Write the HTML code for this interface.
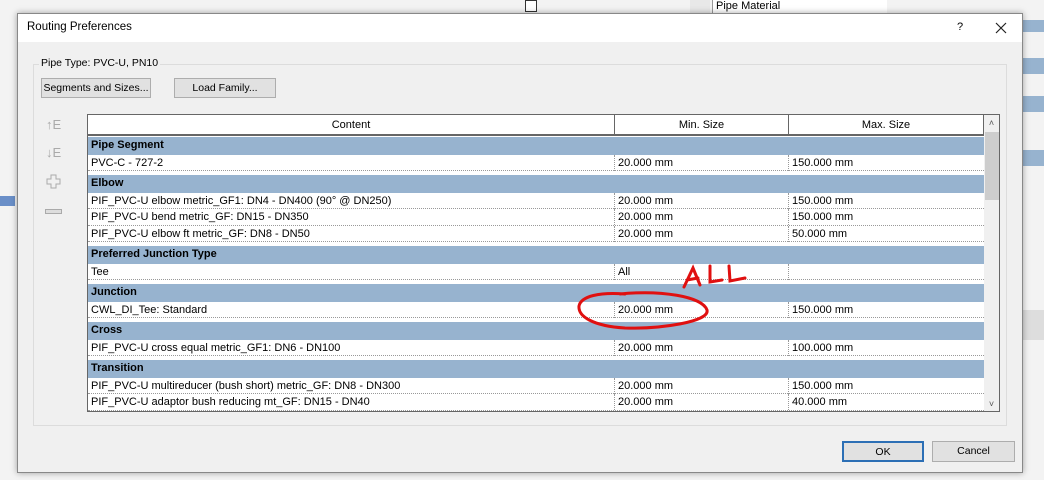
<!DOCTYPE html>
<html><head><style>
*{margin:0;padding:0;box-sizing:border-box}
body{width:1044px;height:480px;overflow:hidden;background:#f3f3f3;font-family:"Liberation Sans",sans-serif;font-size:11px;color:#000;position:relative}
.abs{position:absolute}
#dlg{left:17px;top:13px;width:1006px;height:460px;background:#f0f0f0;border:1px solid #888;box-shadow:0 0 6px rgba(0,0,0,.35)}
#title{left:0;top:0;width:1004px;height:28px;background:#fff}
.btn{position:absolute;background:#e1e1e1;border:1px solid #adadad;text-align:center;font-size:10.5px;white-space:nowrap}
.row{position:absolute;left:0;width:896px;font-size:11px;white-space:nowrap}
.g{background:#97b3cf;font-weight:bold;height:17.5px;line-height:17px;padding-left:3px}
.d{background:#fff;height:16.5px;line-height:16px;border-bottom:1px dotted #999}
.d span{position:absolute;top:0;padding-left:3px}
.d .c2{left:526px;border-left:1px dotted #999;height:16px}
.d .c3{left:700px;border-left:1px dotted #999;height:16px}
</style></head><body>
<div class="abs" style="left:525px;top:0;width:12px;height:12px;border:1px solid #333;background:#fff"></div>
<div class="abs" style="left:690px;top:0;width:20px;height:13px;background:#e8e8e8"></div>
<div class="abs" style="left:712px;top:0;width:175px;height:13px;background:#fff;border-left:1px solid #999;font-size:11px;padding-left:3px">Pipe Material</div>
<div class="abs" style="left:1023px;top:20px;width:21px;height:12px;background:#97b3cf"></div>
<div class="abs" style="left:1023px;top:58px;width:21px;height:16px;background:#97b3cf"></div>
<div class="abs" style="left:1023px;top:96px;width:21px;height:16px;background:#97b3cf"></div>
<div class="abs" style="left:1023px;top:150px;width:21px;height:16px;background:#97b3cf"></div>
<div class="abs" style="left:1023px;top:310px;width:21px;height:30px;background:#ddd"></div>
<div class="abs" style="left:0;top:196px;width:15px;height:10px;background:#6a8fc8"></div>
<div id="dlg" class="abs">
 <div id="title" class="abs"><span style="position:absolute;left:9px;top:7px;font-size:11.5px">Routing Preferences</span>
  <span style="position:absolute;left:939px;top:7px;font-size:11px">?</span>
  <svg style="position:absolute;left:977px;top:8px" width="12" height="12"><path d="M1 1L11 11M11 1L1 11" stroke="#222" stroke-width="1.2"/></svg></div>
 <div class="abs" style="left:15px;top:50px;width:974px;height:362px;border:1px solid #dcdcdc"></div>
 <div class="abs" style="left:21px;top:43px;background:#f0f0f0;padding:0 2px;font-size:10.5px">Pipe Type: PVC-U, PN10</div>
 <div class="btn" style="left:23px;top:64px;width:110px;height:20px;line-height:18px">Segments and Sizes...</div>
 <div class="btn" style="left:156px;top:64px;width:102px;height:20px;line-height:18px">Load Family...</div>
 <div class="abs" style="left:28px;top:103px;color:#aaa;font-size:13px">↑E</div>
 <div class="abs" style="left:28px;top:131px;color:#aaa;font-size:13px">↓E</div>
 <svg class="abs" style="left:28px;top:160px" width="15" height="15"><path d="M5 1H10V5H14V10H10V14H5V10H1V5H5Z" fill="none" stroke="#aaa"/></svg>
 <div class="abs" style="left:27px;top:195px;width:17px;height:5px;border:1px solid #aaa;background:#ddd"></div>
 <div class="abs" style="left:69px;top:100px;width:913px;height:298px;border:1px solid #666;background:#fff;overflow:hidden">
  <div class="abs" style="left:0;top:0;width:896px;height:21px;border-bottom:2px solid #666;background:#fff;font-size:11px">
   <span class="abs" style="left:0;width:526px;text-align:center;top:4px">Content</span>
   <span class="abs" style="left:526px;width:174px;height:19px;border-left:1px solid #666;text-align:center;top:0;padding-top:4px">Min. Size</span>
   <span class="abs" style="left:700px;width:196px;height:19px;border-left:1px solid #666;border-right:1px solid #666;text-align:center;top:0;padding-top:4px">Max. Size</span>
  </div>
  <div class="abs" style="left:896px;top:0;width:15px;height:296px;background:#f0f0f0">
   <div style="font-size:9px;text-align:center;color:#555;margin-top:3px">˄</div>
   <div style="position:absolute;left:1px;top:17px;width:14px;height:68px;background:#cdcdcd"></div>
   <div style="position:absolute;bottom:2px;width:15px;font-size:9px;text-align:center;color:#555">˅</div>
  </div>
  <div class="abs" style="left:0;top:22px;width:896px">
   <div style="position:relative;height:276px">
   <div class="row g" style="top:0">Pipe Segment</div>
   <div class="row d" style="top:17.5px"><span>PVC-C - 727-2</span><span class="c2">20.000 mm</span><span class="c3">150.000 mm</span></div>
   <div class="row g" style="top:38px">Elbow</div>
   <div class="row d" style="top:55.5px"><span>PIF_PVC-U elbow metric_GF1: DN4 - DN400 (90° @ DN250)</span><span class="c2">20.000 mm</span><span class="c3">150.000 mm</span></div>
   <div class="row d" style="top:72px"><span>PIF_PVC-U bend metric_GF: DN15 - DN350</span><span class="c2">20.000 mm</span><span class="c3">150.000 mm</span></div>
   <div class="row d" style="top:88.5px"><span>PIF_PVC-U elbow ft metric_GF: DN8 - DN50</span><span class="c2">20.000 mm</span><span class="c3">50.000 mm</span></div>
   <div class="row g" style="top:109px">Preferred Junction Type</div>
   <div class="row d" style="top:126.5px"><span>Tee</span><span class="c2">All</span><span class="c3"></span></div>
   <div class="row g" style="top:147px">Junction</div>
   <div class="row d" style="top:164.5px"><span>CWL_DI_Tee: Standard</span><span class="c2">20.000 mm</span><span class="c3">150.000 mm</span></div>
   <div class="row g" style="top:185px">Cross</div>
   <div class="row d" style="top:202.5px"><span>PIF_PVC-U cross equal metric_GF1: DN6 - DN100</span><span class="c2">20.000 mm</span><span class="c3">100.000 mm</span></div>
   <div class="row g" style="top:223px">Transition</div>
   <div class="row d" style="top:240.5px"><span>PIF_PVC-U multireducer (bush short) metric_GF: DN8 - DN300</span><span class="c2">20.000 mm</span><span class="c3">150.000 mm</span></div>
   <div class="row d" style="top:257px"><span>PIF_PVC-U adaptor bush reducing mt_GF: DN15 - DN40</span><span class="c2">20.000 mm</span><span class="c3">40.000 mm</span></div>
   </div>
  </div>
 </div>
 <div class="btn" style="left:824px;top:427px;width:82px;height:21px;line-height:19px;border:2px solid #2c6fb5">OK</div>
 <div class="btn" style="left:914px;top:427px;width:83px;height:21px;line-height:19px">Cancel</div>
</div>
<svg class="abs" style="left:0;top:0" width="1044" height="480">
 <g fill="none" stroke="#e01010" stroke-width="3" stroke-linecap="round">
  <path d="M620 294 C660 290 702 296 707 310 C710 322 660 329 625 328 C592 326 578 316 579 306 C581 296 600 292 625 294"/>
  <path d="M684 287 L693 268 L700 285 M687 280 L698 278"/>
  <path d="M710 266 L710 282 L722 280"/>
  <path d="M729 266 L730 281 L745 278"/>
 </g>
</svg>
</body></html>
